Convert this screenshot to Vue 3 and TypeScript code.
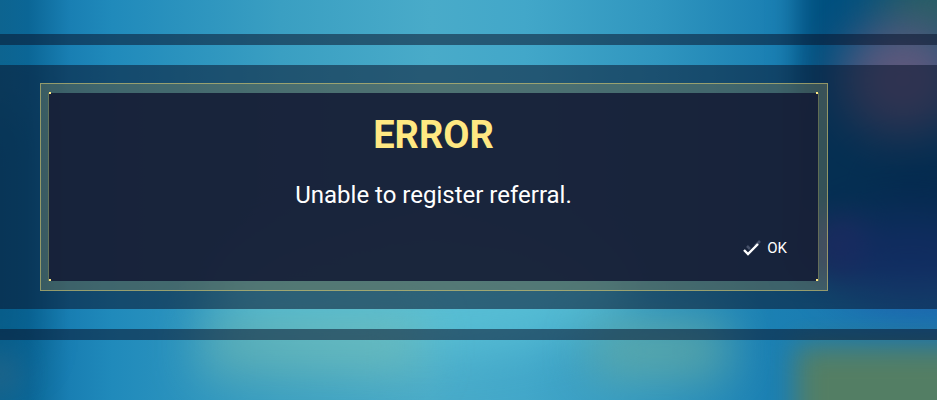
<script setup lang="ts">
import { ref } from 'vue'

const title = 'ERROR'
const message = 'Unable to register referral.'
const open = ref(true)

function dismiss(): void {
  open.value = false
}
</script>

<template>
  <main class="screen">
    <svg class="backdrop" viewBox="0 0 937 400" preserveAspectRatio="none" aria-hidden="true">
      <defs>
        <linearGradient id="sky" x1="0" x2="1" y1="0" y2="0">
          <stop offset="0" stop-color="#0d6490" />
          <stop offset="0.03" stop-color="#0b6696" />
          <stop offset="0.075" stop-color="#197fb3" />
          <stop offset="0.12" stop-color="#208abb" />
          <stop offset="0.3" stop-color="#3a9fc2" />
          <stop offset="0.46" stop-color="#49abc9" />
          <stop offset="0.56" stop-color="#42a7c9" />
          <stop offset="0.7" stop-color="#3096bf" />
          <stop offset="0.82" stop-color="#1b80b3" />
          <stop offset="1" stop-color="#1a75af" />
        </linearGradient>
        <filter id="soft" x="-100%" y="-100%" width="300%" height="300%" color-interpolation-filters="sRGB">
          <feGaussianBlur stdDeviation="14" />
        </filter>
        <filter id="softer" x="-150%" y="-150%" width="400%" height="400%" color-interpolation-filters="sRGB">
          <feGaussianBlur stdDeviation="24" />
        </filter>
      </defs>
      <rect width="937" height="400" fill="url(#sky)" />
      <ellipse cx="420" cy="290" rx="210" ry="65" fill="#60c8da" opacity="0.65" filter="url(#softer)" />
      <rect x="-60" y="110" width="90" height="250" fill="#005381" opacity="0.45" filter="url(#softer)" />
      <rect x="797" y="-70" width="250" height="340" fill="#00507f" filter="url(#soft)" />
      <ellipse cx="937" cy="5" rx="60" ry="32" fill="#396558" opacity="0.8" filter="url(#softer)" />
      <ellipse cx="903" cy="80" rx="62" ry="58" fill="#6f5a7c" opacity="0.85" filter="url(#softer)" />
      <ellipse cx="935" cy="190" rx="65" ry="25" fill="#00376f" opacity="0.6" filter="url(#softer)" />
      <ellipse cx="840" cy="246" rx="32" ry="32" fill="#3f449c" opacity="0.75" filter="url(#soft)" />
      <ellipse cx="910" cy="258" rx="80" ry="42" fill="#2446a8" opacity="0.75" filter="url(#softer)" />
      <rect x="200" y="316" width="222" height="60" fill="#76bbb0" opacity="0.6" filter="url(#softer)" />
      <rect x="592" y="326" width="136" height="50" fill="#75b29b" opacity="0.65" filter="url(#softer)" />
      <rect x="796" y="346" width="220" height="110" fill="#577f60" opacity="0.95" filter="url(#soft)" />
      <circle cx="0" cy="374" r="20" fill="#326584" opacity="0.5" filter="url(#soft)" />
    </svg>

    <div class="stripe"></div>
    <div class="band">
      <section v-if="open" class="frame" role="alertdialog" aria-labelledby="dialog-title" aria-describedby="dialog-message">
        <div class="panel">
          <h1 id="dialog-title">{{ title }}</h1>
          <p id="dialog-message">{{ message }}</p>
          <footer>
            <button type="button" @click="dismiss">
              <svg class="check" viewBox="0 0 18 16" aria-hidden="true">
                <path d="M4 6 7 9M12 6 17 1" fill="none" stroke="#46516a" stroke-width="2.6" />
                <path d="M1 10 5 14 15 4" fill="none" stroke="#fff" stroke-width="2.4" />
              </svg>
              <span>OK</span>
            </button>
          </footer>
          <i class="corner top left"></i>
          <i class="corner top right"></i>
          <i class="corner bottom left"></i>
          <i class="corner bottom right"></i>
        </div>
      </section>
    </div>
    <div class="stripe"></div>
  </main>
</template>

<style>
body {
  margin: 0;
}
</style>

<style scoped>
.screen {
  position: relative;
  box-sizing: border-box;
  min-height: 100vh;
  padding-top: 34px;
  display: flex;
  flex-direction: column;
  gap: 20px;
  overflow: hidden;
  color: #fff;
  font-family: Roboto, "Liberation Sans", sans-serif;
}

.backdrop {
  position: absolute;
  inset: 0;
  width: 100%;
  height: 100%;
}

.stripe,
.band {
  position: relative;
  background: rgba(10, 20, 45, 0.54);
}

.stripe {
  height: 11px;
}

.band {
  padding: 18px 109px 18px 40px;
}

.frame {
  padding: 9px 8px 9px 7px;
  border: 1px solid rgba(218, 204, 112, 0.66);
  background: rgba(225, 205, 110, 0.22);
  background-clip: padding-box;
}

.panel {
  position: relative;
  padding: 20px 31px 22px;
  border: solid rgba(160, 150, 80, 0.4);
  border-width: 0 1px;
  background: rgba(18, 26, 52, 0.88);
  background-clip: padding-box;
  text-align: center;
}

h1 {
  margin: 0;
  font-size: 38px;
  line-height: 44px;
  font-weight: 700;
  color: #ffe882;
}

p {
  margin: 24px 0 28px;
  font-size: 24px;
  line-height: 28px;
  font-weight: 400;
}

footer {
  display: flex;
  justify-content: flex-end;
}

button {
  display: flex;
  align-items: center;
  gap: 6px;
  padding: 0;
  border: 0;
  background: none;
  color: #fff;
  font-family: inherit;
  font-size: 15px;
  line-height: 22px;
  font-weight: 400;
  cursor: pointer;
}

.check {
  width: 18px;
  height: 16px;
}

.corner {
  position: absolute;
  width: 2px;
  height: 2px;
  background: #ffe882;
}

.top {
  top: -1px;
}

.bottom {
  bottom: 0;
}

.left {
  left: 0;
}

.right {
  right: 0;
}
</style>
